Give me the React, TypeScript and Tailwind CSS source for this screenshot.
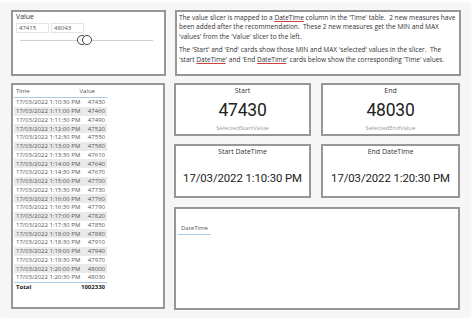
import React from "react";

const rows = Array.from({ length: 21 }, (_, i) => {
  const sec = 630 + i * 30;
  const m = Math.floor(sec / 60);
  const s = sec % 60;
  return {
    time: `17/03/2022 1:${m}:${s === 0 ? "00" : "30"} PM`,
    value: 47430 + i * 30,
  };
});

const sans = { fontFamily: '"Open Sans", "Noto Sans", sans-serif' };
const din = { fontFamily: 'Roboto, "Liberation Sans", sans-serif' };

function Spell({ children }: { children: React.ReactNode }) {
  return (
    <span className="underline decoration-[#d04040] underline-offset-[1px]">
      {children}
    </span>
  );
}

function Card({ title, value, sub }: { title: string; value: string; sub: string }) {
  return (
    <div className="border-2 border-[#979797] bg-white h-[53px] flex flex-col items-center">
      <div className="text-[7px] text-[#333] leading-none mt-[2px]" style={sans}>
        {title}
      </div>
      <div className="text-[17.5px] text-[#222] leading-none mt-[8px] tracking-[-0.2px]" style={din}>
        {value}
      </div>
      <div className="text-[6px] text-[#999] leading-none mt-[5px]" style={sans}>
        {sub}
      </div>
    </div>
  );
}

function DateCard({ title, value }: { title: string; value: string }) {
  return (
    <div className="border-2 border-[#979797] bg-white h-[54px] flex flex-col items-center">
      <div className="text-[7px] text-[#333] leading-none mt-[2px]" style={sans}>
        {title}
      </div>
      <div className="text-[11.4px] text-[#222] leading-none mt-[18px] whitespace-nowrap tracking-[-0.1px]" style={din}>
        {value}
      </div>
    </div>
  );
}

export default function App() {
  return (
    <div className="w-[474px] h-[327px] bg-white overflow-hidden">
      <div className="w-[470px] h-[313px] mt-[3px] bg-[#f6f6f6] shadow-[0_1px_3px_rgba(0,0,0,0.08)] pl-[11px] pt-[7px] flex flex-col gap-[7px]">
        {/* top row */}
        <div className="flex gap-[9px] h-[66px]">
          <div className="w-[155px] border-2 border-[#979797] bg-white px-[3px] pt-[1px]" style={sans}>
            <div className="text-[7px] text-[#333] leading-none">Value</div>
            <div className="flex gap-[2px] mt-[3px]">
              <div className="w-[33px] h-[10px] border border-[#e4e4e4] text-[6px] text-[#555] leading-[8px] pl-[2px]">
                47415
              </div>
              <div className="w-[33px] h-[10px] border border-[#e4e4e4] text-[6px] text-[#555] leading-[8px] pl-[2px]">
                48043
              </div>
            </div>
            <div className="relative h-[12px] mt-[2px] mx-[4px]">
              <div className="absolute left-0 right-[4px] top-[5px] h-px bg-[#d0d0d0]" />
              <div className="absolute left-[57px] top-0 w-[10px] h-[10px] rounded-full border border-[#444] bg-white" />
              <div className="absolute left-[62px] top-0 w-[10px] h-[10px] rounded-full border border-[#444] bg-white" />
            </div>
          </div>
          <div className="w-[286px] border-2 border-[#979797] bg-white px-[2px] pt-[1px] text-[6.55px] text-[#333] leading-[9.4px] whitespace-nowrap" style={sans}>
            <div>
              The value slicer is mapped to a <Spell>DateTime</Spell> column in the 'Time' table.&nbsp; 2 new measures have
            </div>
            <div>been added after the recommendation.&nbsp; These 2 new measures get the MIN and MAX</div>
            <div>'values' from the 'Value' slicer to the left.</div>
            <div className="mt-[4px]">
              The 'Start' and 'End' cards show those MIN and MAX 'selected' values in the slicer.&nbsp; The
            </div>
            <div>
              'start <Spell>DateTime</Spell>' and 'End <Spell>DateTime</Spell>' cards below show the corresponding 'Time' values.
            </div>
          </div>
        </div>

        {/* bottom row */}
        <div className="flex gap-[9px]">
          <div className="w-[154px] h-[226px] border-2 border-[#979797] bg-white pl-[1px] pt-[1px]" style={sans}>
            <div className="w-[93px]">
              <div className="flex justify-between h-[12px] items-center text-[6px] text-[#555] border-b border-[#a9cbe8] px-[2px]">
                <span>Time</span>
                <span className="mr-[10px]">Value</span>
              </div>
              {rows.map((r, i) => (
                <div
                  key={r.time}
                  className={`flex justify-between items-center h-[8.75px] text-[6px] leading-none text-[#555] px-[2px] ${
                    i % 2 === 1 ? "bg-[#eaeaea]" : ""
                  }`}
                >
                  <span>{r.time}</span>
                  <span>{r.value}</span>
                </div>
              ))}
              <div className="flex justify-between items-center h-[9px] text-[6px] leading-none font-bold text-[#222] border-t border-[#a9cbe8] px-[2px]">
                <span>Total</span>
                <span>1002330</span>
              </div>
            </div>
          </div>

          <div className="w-[286px] flex flex-col">
            <div className="grid grid-cols-[137px_139px] gap-x-[10px] gap-y-[8px]">
              <Card title="Start" value="47430" sub="SelectedStartValue" />
              <Card title="End" value="48030" sub="SelectedEndValue" />
              <DateCard title="Start DateTime" value="17/03/2022 1:10:30 PM" />
              <DateCard title="End DateTime" value="17/03/2022 1:20:30 PM" />
            </div>
            <div className="mt-[9px] h-[103px] border-2 border-[#979797] bg-white pl-[2px] pt-[3px]" style={sans}>
              <div className="inline-block text-[6px] text-[#555] leading-none px-[3px] pb-[3px] border-b border-[#a9cbe8]">
                DateTime
              </div>
            </div>
          </div>
        </div>
      </div>
    </div>
  );
}
